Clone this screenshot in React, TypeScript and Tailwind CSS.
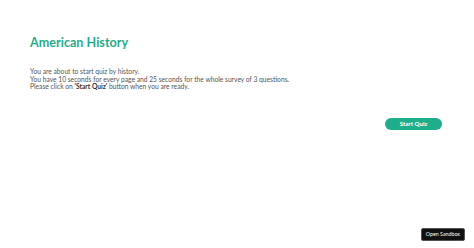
export default function App() {
  return (
    <div className="relative w-[474px] h-[248px] bg-white font-['Lato',sans-serif] overflow-hidden">
      <div className="pl-[30px] pr-[32px] pt-[35px]">
        <h1 className="text-[12.6px] leading-[15px] font-bold text-[#1fae8c]">American History</h1>
        <div className="mt-[18px] text-[6.7px] leading-[7.6px] text-[#555]">
          <p>You are about to start quiz by history.</p>
          <p>You have 10 seconds for every page and 25 seconds for the whole survey of 3 questions.</p>
          <p>
            Please click on <b className="text-[#333]">'Start Quiz'</b> button when you are ready.
          </p>
        </div>
        <div className="flex justify-end mt-[27px]">
          <button className="w-[57px] h-[12px] rounded-full bg-[#1fae8c] text-white text-[6.2px] font-bold leading-[12px]">
            Start Quiz
          </button>
        </div>
      </div>
      <div className="absolute right-[9px] bottom-[7px] bg-[#111] border border-[#555] rounded-[2px] text-white text-[5.3px] px-[4px] h-[13px] leading-[11px]">
        Open Sandbox
      </div>
    </div>
  );
}
